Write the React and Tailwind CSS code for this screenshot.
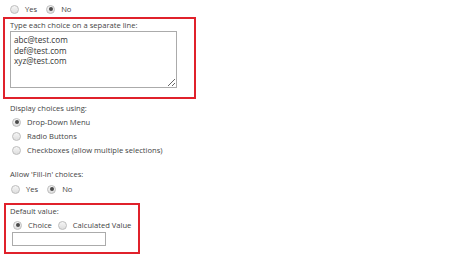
import React from 'react';

const Radio = ({ checked = false }) => (
    <span className="inline-flex h-[9px] w-[9px] shrink-0 items-center justify-center rounded-full border border-[#bdbdbd] bg-gradient-to-b from-[#f6f6f6] to-[#dedede]">
        {checked && <span className="h-[4px] w-[4px] rounded-full bg-[#4a4a4a]" />}
    </span>
);

const Option = ({ checked, label, className = '' }) => (
    <span className={`flex items-center gap-[6px] whitespace-nowrap ${className}`}>
        <Radio checked={checked} />
        <span>{label}</span>
    </span>
);

const font = { fontFamily: '"Open Sans", "Noto Sans", sans-serif' };

const App = () => {
    return (
        <div
            className="h-[268px] w-[474px] overflow-hidden whitespace-nowrap bg-white text-[7.6px] leading-[12px] text-[#444]"
            style={font}
        >
            <div className="mt-[3px] flex h-[12px] items-center pl-[10px]">
                <Option label="Yes" />
                <Option checked label="No" className="ml-[9px]" />
            </div>

            <div className="ml-[3px] mt-[2px] h-[82px] w-[193px] border-2 border-[#e0212b] pl-[5px]">
                <div className="h-[12px]">Type each choice on a separate line:</div>
                <textarea
                    readOnly
                    defaultValue={'abc@test.com\ndef@test.com\nxyz@test.com'}
                    className="block h-[57px] w-[167px] resize border border-[#ababab] px-[3px] py-[3px] text-[8.2px] leading-[10.5px] text-[#333] outline-none"
                    style={font}
                />
            </div>

            <div className="mt-[3px] pl-[10px]">Display choices using:</div>
            <div className="mt-[1px] flex flex-col pl-[12px]">
                <Option checked label="Drop-Down Menu" className="h-[14px]" />
                <Option label="Radio Buttons" className="h-[14px]" />
                <Option label="Checkboxes (allow multiple selections)" className="h-[14px]" />
            </div>

            <div className="mt-[11px] pl-[10px]">Allow 'Fill-in' choices:</div>
            <div className="mt-[2px] flex h-[14px] items-center pl-[11px]">
                <Option label="Yes" />
                <Option checked label="No" className="ml-[9px]" />
            </div>

            <div className="ml-[4px] mt-[7px] h-[51px] w-[136px] border-2 border-[#e0212b] pl-[4px]">
                <div className="h-[12px]">Default value:</div>
                <div className="mt-[2px] flex h-[12px] items-center pl-[3px]">
                    <Option checked label="Choice" className="gap-[5px]" />
                    <Option label="Calculated Value" className="ml-[6px] gap-[5px]" />
                </div>
                <div className="ml-[2px] mt-[1px] h-[14px] w-[94px] border border-[#ababab] bg-white" />
            </div>
        </div>
    );
};

export default App;
